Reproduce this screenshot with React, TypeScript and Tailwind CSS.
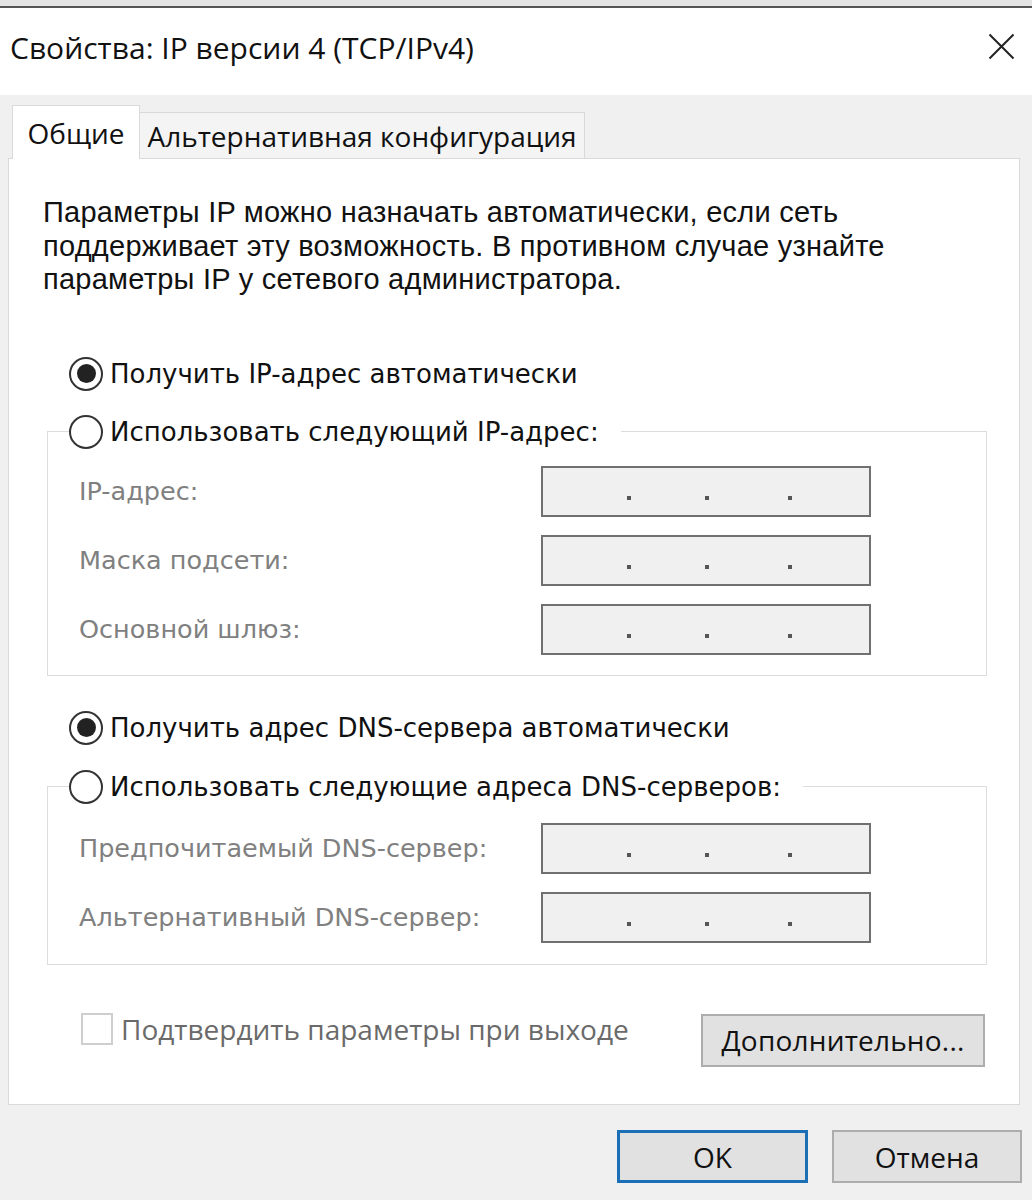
import React from 'react';

const seg = '"Open Sans", "Noto Sans", sans-serif';
const tah = '"DejaVu Sans", "Noto Sans", sans-serif';
const ari = '"Liberation Sans", Arial, sans-serif';

const Radio = ({ checked }: { checked?: boolean }) => (
  <span className="flex h-[34px] w-[34px] shrink-0 items-center justify-center rounded-full border-[2.5px] border-[#333] bg-white">
    {checked && <span className="h-[19px] w-[19px] rounded-full bg-[#222]" />}
  </span>
);

const IpBox = () => (
  <div className="flex h-[51px] w-[330px] items-start border-2 border-[#707070] bg-[#f0f0f0] pl-[84px] pt-[28px]">
    <span className="h-[4px] w-[4px] bg-[#555]" />
    <span className="w-[74px]" />
    <span className="h-[4px] w-[4px] bg-[#555]" />
    <span className="w-[79px]" />
    <span className="h-[4px] w-[4px] bg-[#555]" />
  </div>
);

const FieldRow = ({ label }: { label: string }) => (
  <div className="flex items-center">
    <span className="w-[462px] text-[25.5px] text-[#808080]" style={{ fontFamily: tah }}>
      {label}
    </span>
    <IpBox />
  </div>
);

const RadioRow = ({ label, checked }: { label: string; checked?: boolean }) => (
  <div className="flex h-[34px] items-center gap-[7px]">
    <Radio checked={checked} />
    <span className="text-[26px] leading-[34px] text-[#111]" style={{ fontFamily: tah }}>
      {label}
    </span>
  </div>
);

const Group = ({ title, rows, top, bottom }: { title: string; rows: string[]; top: string; bottom: string }) => (
  <fieldset className={`mr-[32px] ml-[38px] border border-[#dcdcdc] ${bottom}`}>
    <legend className="ml-[21px] bg-white pr-[22px]">
      <RadioRow label={title} />
    </legend>
    <div className={`flex flex-col gap-[18px] pl-[31px] ${top}`}>
      {rows.map((r) => (
        <FieldRow key={r} label={r} />
      ))}
    </div>
  </fieldset>
);

export default function App() {
  return (
    <div className="h-[1200px] w-[1032px] overflow-hidden bg-[#f0f0f0]">
      <div className="h-[8px] border-b-[2px] border-[#555] bg-[#e4e4e4]" />
      <div className="flex h-[87px] items-center justify-between bg-white pr-[17px] pb-[8px] pl-[10px]">
        <span className="text-[30px] text-[#111]" style={{ fontFamily: seg }}>
          Свойства: IP версии 4 (TCP/IPv4)
        </span>
        <svg width="27" height="27" viewBox="0 0 27 27" className="mb-[3px]">
          <path d="M1.5 1.5 L25.5 25.5 M25.5 1.5 L1.5 25.5" stroke="#222" strokeWidth="2" />
        </svg>
      </div>

      <div className="relative z-10 flex items-end pt-[10px] pl-[12px]" style={{ fontFamily: seg }}>
        <div className="-mb-px flex h-[54px] w-[128px] items-center justify-center border border-b-0 border-[#d9d9d9] bg-white text-[28px] text-[#111]">
          Общие
        </div>
        <div className="flex h-[46px] w-[445px] items-center justify-center border border-b-0 border-l-0 border-[#d9d9d9] bg-[#f4f4f4] text-[28px] text-[#111]">
          Альтернативная конфигурация
        </div>
      </div>

      <div className="ml-[8px] h-[947px] w-[1012px] border border-[#d9d9d9] bg-white">
        <p className="pt-[37px] pl-[34px] text-[29px] leading-[33.5px] tracking-[0.25px] text-[#111]" style={{ fontFamily: ari }}>
          Параметры IP можно назначать автоматически, если сеть
          <br />
          поддерживает эту возможность. В противном случае узнайте
          <br />
          параметры IP у сетевого администратора.
        </p>

        <div className="mt-[60px] ml-[60px]">
          <RadioRow label="Получить IP-адрес автоматически" checked />
        </div>

        <div className="mt-[24px]">
          <Group
            title="Использовать следующий IP-адрес:"
            rows={['IP-адрес:', 'Маска подсети:', 'Основной шлюз:']}
            top="pt-[17px]"
            bottom="pb-[20px]"
          />
        </div>

        <div className="mt-[35px] ml-[60px]">
          <RadioRow label="Получить адрес DNS-сервера автоматически" checked />
        </div>

        <div className="mt-[25px]">
          <Group
            title="Использовать следующие адреса DNS-серверов:"
            rows={['Предпочитаемый DNS-сервер:', 'Альтернативный DNS-сервер:']}
            top="pt-[19px]"
            bottom="pb-[21px]"
          />
        </div>

        <div className="mt-[48px] flex items-start justify-between pr-[34px] pl-[72px]" style={{ fontFamily: seg }}>
          <div className="flex h-[32px] items-center gap-[8px]">
            <span className="h-[32px] w-[32px] border-2 border-[#cfcfcf] bg-white" />
            <span className="text-[28px] leading-[32px] text-[#6a6a6a]">Подтвердить параметры при выходе</span>
          </div>
          <button className="mt-[1px] flex h-[53px] w-[284px] items-center justify-center border-2 border-[#adadad] bg-[#e1e1e1] text-[28px] tracking-[0.2px] text-[#111]">
            Дополнительно...
          </button>
        </div>
      </div>

      <div className="flex justify-end gap-[24px] pt-[25px] pr-[10px]" style={{ fontFamily: seg }}>
        <button className="flex h-[53px] w-[191px] items-center justify-center border-[3px] border-[#1a6fb5] bg-[#e1e1e1] text-[28px] text-[#111]">
          OK
        </button>
        <button className="flex h-[53px] w-[190px] items-center justify-center border-2 border-[#adadad] bg-[#e1e1e1] text-[28px] text-[#111]">
          Отмена
        </button>
      </div>
    </div>
  );
}
